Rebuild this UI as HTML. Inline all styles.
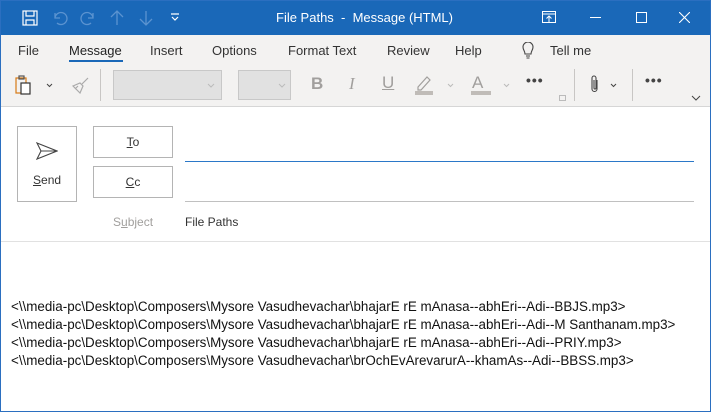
<!DOCTYPE html>
<html><head><meta charset="utf-8"><style>
*{margin:0;padding:0;box-sizing:border-box}
body{width:711px;height:412px;overflow:hidden;font-family:"Liberation Sans",sans-serif;background:#fff;position:relative}
.win{position:absolute;inset:0;border:1px solid #2b6fc0}
.a{position:absolute;white-space:nowrap}
.tb{position:absolute;left:0;top:0;width:711px;height:35px;background:#1a68b8}
.rib{position:absolute;left:0;top:35px;width:711px;height:72px;background:#f3f2f1;border-bottom:1px solid #d6d6d6}
.tab{font-size:13px;color:#333;top:43px}
.box{position:absolute;background:#e1e1e1;border:1px solid #c8c8c8}
.btn{position:absolute;border:1px solid #b4b4b4;background:#fff;font-size:12px;color:#333;text-align:center}
.body{position:absolute;left:11px;top:298px;font-size:13.4px;line-height:18px;color:#111}
</style></head><body>
<div class="tb"></div>
<svg class="a" style="left:22px;top:10px" width="16" height="16" viewBox="0 0 16 16" fill="none" stroke="#fff" stroke-width="1.2"><rect x="1" y="1" width="14" height="14"/><path d="M4 1v5h8V1M4 15v-5h8v5"/></svg>
<svg class="a" style="left:50px;top:9px" width="120" height="18" viewBox="0 0 120 18" fill="none" stroke="#5b93d0" stroke-width="1.3"><path d="M5 4v5h5M5 9a6 6 0 1 1 2 5"/><path d="M43 4v5h-5M43 9a6 6 0 1 0-2 5"/><path d="M67 16V2M61 8l6-6 6 6"/><path d="M96 2v14M90 10l6 6 6-6"/></svg>
<svg class="a" style="left:170px;top:12px" width="10" height="10" viewBox="0 0 10 10" fill="none" stroke="#fff" stroke-width="1.2"><path d="M1 2h8M2 5l3 3 3-3"/></svg>
<div class="a" style="left:276px;top:10px;font-size:13px;color:#fff">File Paths &nbsp;-&nbsp; Message (HTML)</div>
<svg class="a" style="left:542px;top:11px" width="14" height="12" viewBox="0 0 14 12" fill="none" stroke="#fff" stroke-width="1"><rect x="0.5" y="0.5" width="13" height="11"/><path d="M0.5 3h13M7 11V5M4.5 7.5 7 5l2.5 2.5"/></svg>
<div class="a" style="left:590px;top:17px;width:11px;height:1px;background:#fff"></div>
<div class="a" style="left:636px;top:12px;width:11px;height:11px;border:1px solid #fff"></div>
<svg class="a" style="left:679px;top:12px" width="11" height="11" viewBox="0 0 11 11" stroke="#fff" stroke-width="1.1"><path d="M0 0l11 11M11 0 0 11"/></svg>
<div class="rib"></div>
<div class="a tab" style="left:18px">File</div>
<div class="a tab" style="left:69px;color:#222">Message</div>
<div class="a" style="left:69px;top:60px;width:54px;height:2px;background:#1a68b8"></div>
<div class="a tab" style="left:150px">Insert</div>
<div class="a tab" style="left:212px">Options</div>
<div class="a tab" style="left:288px">Format Text</div>
<div class="a tab" style="left:387px">Review</div>
<div class="a tab" style="left:455px">Help</div>
<svg class="a" style="left:522px;top:42px" width="12" height="18" viewBox="0 0 12 18" fill="none" stroke="#444" stroke-width="1.1"><path d="M3 12c0-3-2-4-2-7a5 5 0 0 1 10 0c0 3-2 4-2 7zM4 14h4M4.5 16h3"/></svg>
<div class="a tab" style="left:550px">Tell me</div>
<svg class="a" style="left:15px;top:75px" width="16" height="20" viewBox="0 0 16 20" fill="none" stroke-width="1.2"><rect x="1" y="3" width="10" height="15" stroke="#d87a16"/><rect x="6" y="8" width="9" height="11" stroke="#333" fill="#fff"/><rect x="4" y="1" width="5" height="3" stroke="#555"/></svg>
<svg class="a" style="left:46px;top:83px" width="7" height="5" viewBox="0 0 7 5" fill="none" stroke="#444"><path d="M1 1l2.5 2.5L6 1"/></svg>
<svg class="a" style="left:70px;top:76px" width="20" height="18" viewBox="0 0 20 18" fill="none" stroke="#aaa" stroke-width="1.2"><path d="M12 8l6-6M3 10l7-3 3 3-3 7zM5 13l3-3"/></svg>
<div class="a" style="left:100px;top:69px;width:1px;height:32px;background:#c8c6c4"></div>
<div class="box" style="left:113px;top:70px;width:109px;height:30px"></div>
<svg class="a" style="left:207px;top:83px" width="8" height="5" fill="none" stroke="#bbb"><path d="M1 1l3 3 3-3"/></svg>
<div class="box" style="left:238px;top:70px;width:53px;height:30px"></div>
<svg class="a" style="left:278px;top:83px" width="8" height="5" fill="none" stroke="#bbb"><path d="M1 1l3 3 3-3"/></svg>
<div class="a" style="left:311px;top:74px;font-size:17px;font-weight:bold;color:#a19f9d">B</div>
<div class="a" style="left:349px;top:74px;font-size:17px;font-style:italic;font-family:'Liberation Serif',serif;color:#a19f9d">I</div>
<div class="a" style="left:382px;top:73px;font-size:17px;color:#a19f9d;text-decoration:underline">U</div>
<svg class="a" style="left:414px;top:73px" width="20" height="22" viewBox="0 0 20 22" fill="none" stroke="#a19f9d" stroke-width="1.2"><path d="M4 14l9-10 3 3-9 10H4z"/><rect x="1" y="18" width="18" height="4" fill="#c0bcb8" stroke="none"/></svg>
<svg class="a" style="left:447px;top:83px" width="7" height="5" fill="none" stroke="#bbb"><path d="M1 1l2.5 2.5L6 1"/></svg>
<div class="a" style="left:472px;top:73px;font-size:17px;color:#a19f9d">A</div>
<div class="a" style="left:471px;top:91px;width:20px;height:4px;background:#c0bcb8"></div>
<svg class="a" style="left:503px;top:83px" width="7" height="5" fill="none" stroke="#bbb"><path d="M1 1l2.5 2.5L6 1"/></svg>
<div class="a" style="left:526px;top:72px;font-size:14px;font-weight:bold;color:#444;letter-spacing:1px">•••</div>
<div class="a" style="left:559px;top:95px;width:7px;height:6px;border:1px solid #bbb"></div>
<div class="a" style="left:574px;top:69px;width:1px;height:32px;background:#c8c6c4"></div>
<svg class="a" style="left:590px;top:74px" width="10" height="20" viewBox="0 0 10 20" fill="none" stroke="#444" stroke-width="1.1"><path d="M7 6v9a2.5 2.5 0 0 1-5 0V4a2 2 0 0 1 4 0v10a1 1 0 0 1-2 0V6"/></svg>
<svg class="a" style="left:610px;top:83px" width="7" height="5" fill="none" stroke="#444"><path d="M1 1l2.5 2.5L6 1"/></svg>
<div class="a" style="left:632px;top:69px;width:1px;height:32px;background:#c8c6c4"></div>
<div class="a" style="left:645px;top:72px;font-size:14px;font-weight:bold;color:#444;letter-spacing:1px">•••</div>
<svg class="a" style="left:691px;top:95px" width="10" height="6" fill="none" stroke="#444"><path d="M1 1l4 4 4-4"/></svg>

<div class="btn" style="left:17px;top:126px;width:60px;height:76px"></div>
<svg class="a" style="left:36px;top:142px" width="22" height="18" viewBox="0 0 22 18" fill="none" stroke="#444" stroke-width="1.1"><path d="M1 1l20 8-20 8 4-8zM5 9h16"/></svg>
<div class="a" style="left:33px;top:173px;font-size:12px;color:#333"><u>S</u>end</div>
<div class="btn" style="left:93px;top:126px;width:80px;height:32px;line-height:30px"><u>T</u>o</div>
<div class="btn" style="left:93px;top:166px;width:80px;height:32px;line-height:30px"><u>C</u>c</div>
<div class="a" style="left:185px;top:161px;width:509px;height:1px;background:#2b78c8"></div>
<div class="a" style="left:185px;top:201px;width:509px;height:1px;background:#c0c0c0"></div>
<div class="a" style="left:113px;top:215px;font-size:12px;color:#a19f9d">S<u>u</u>bject</div>
<div class="a" style="left:185px;top:215px;font-size:12px;color:#333">File Paths</div>
<div class="a" style="left:1px;top:241px;width:709px;height:1px;background:#e1e1e1"></div>
<div class="body">&lt;\\media-pc\Desktop\Composers\Mysore Vasudhevachar\bhajarE rE mAnasa--abhEri--Adi--BBJS.mp3&gt;<br>&lt;\\media-pc\Desktop\Composers\Mysore Vasudhevachar\bhajarE rE mAnasa--abhEri--Adi--M Santhanam.mp3&gt;<br>&lt;\\media-pc\Desktop\Composers\Mysore Vasudhevachar\bhajarE rE mAnasa--abhEri--Adi--PRIY.mp3&gt;<br>&lt;\\media-pc\Desktop\Composers\Mysore Vasudhevachar\brOchEvArevarurA--khamAs--Adi--BBSS.mp3&gt;</div>
<div class="win"></div>
</body></html>
